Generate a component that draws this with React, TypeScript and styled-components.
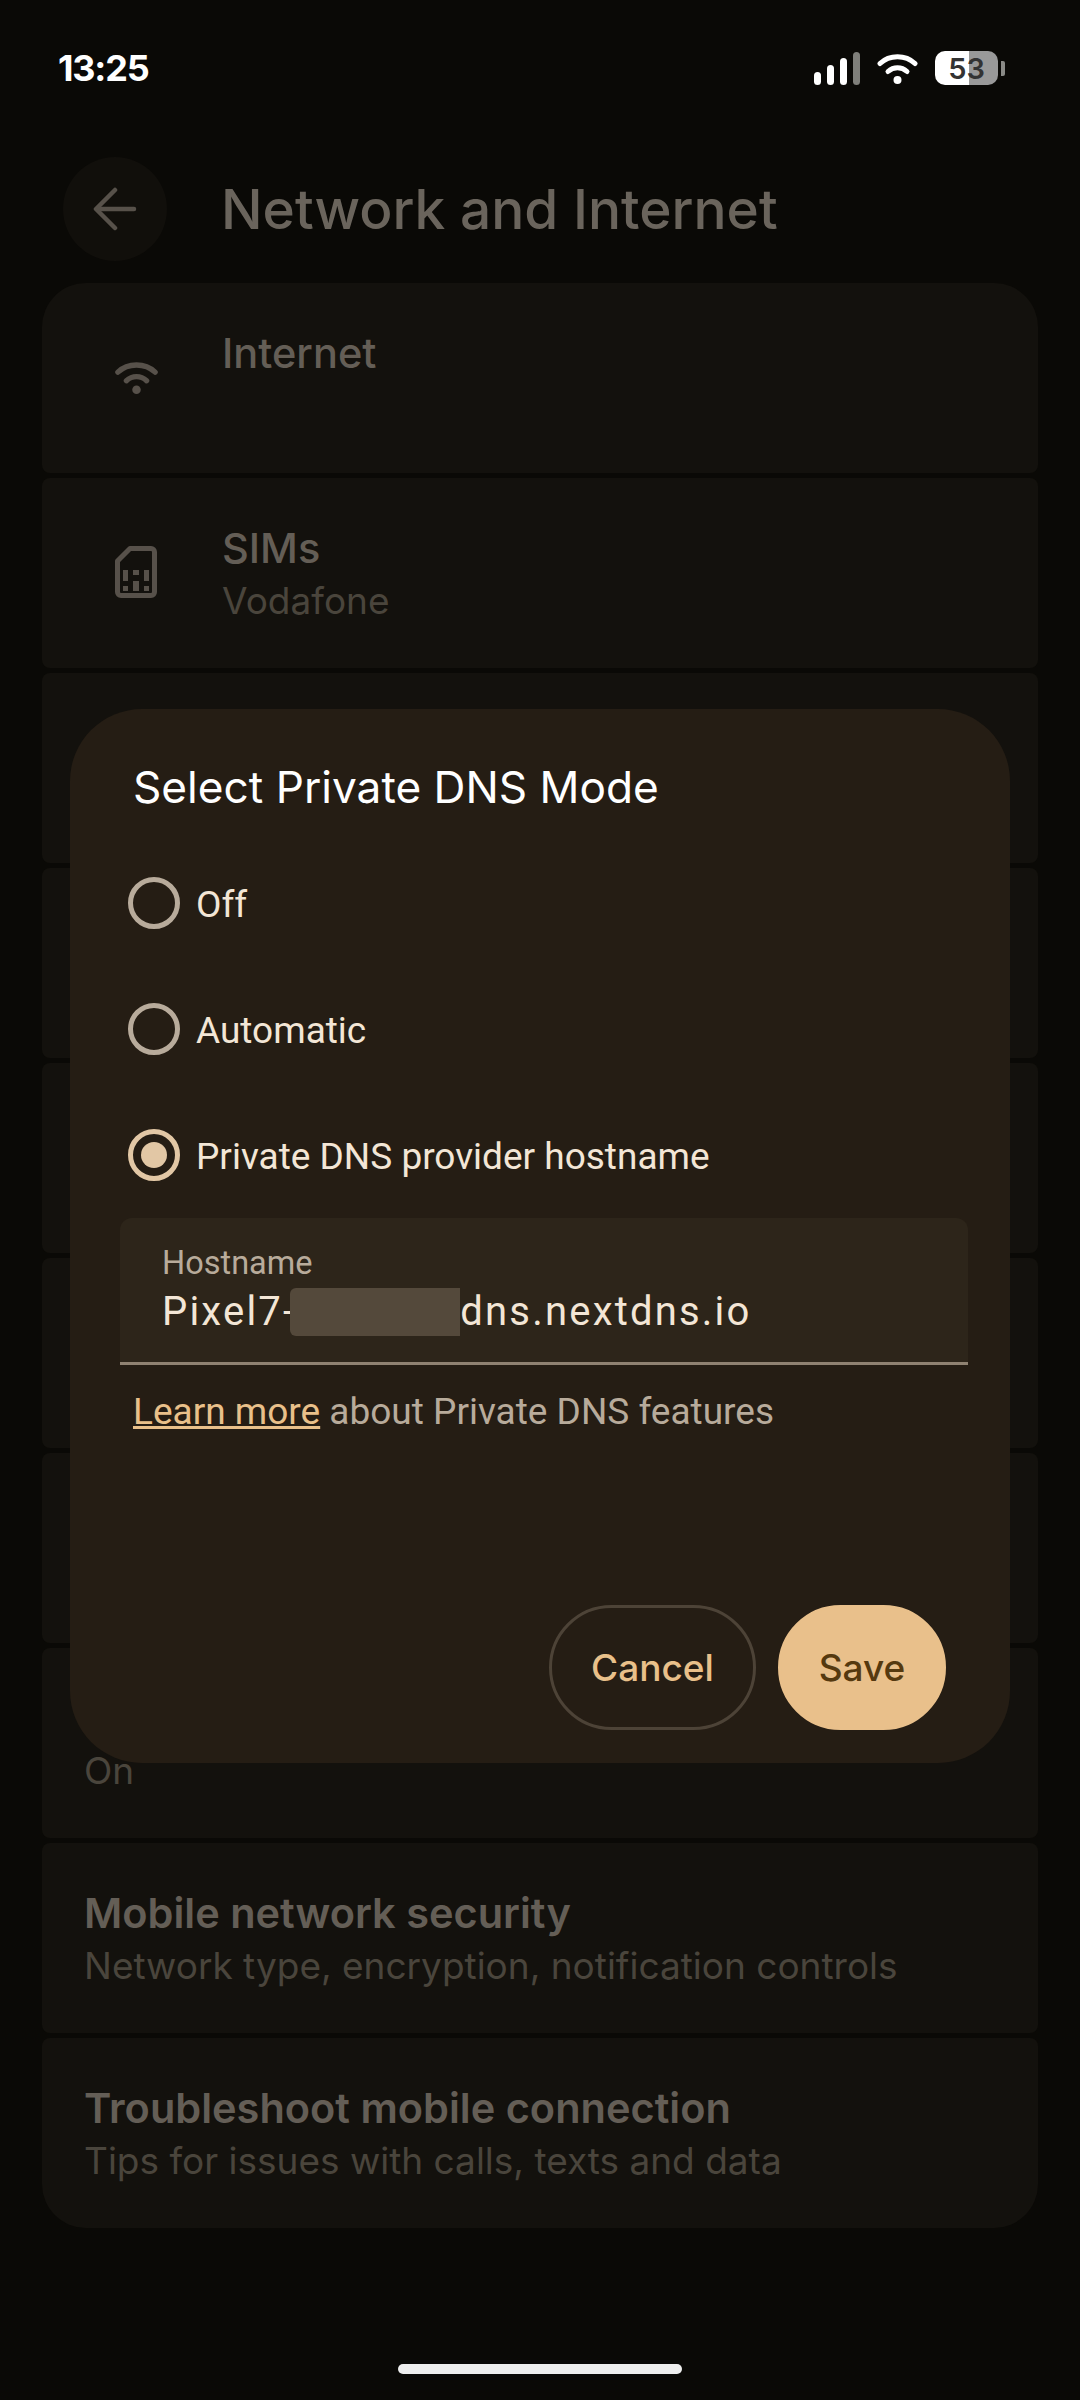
import React from 'react';
import styled, { createGlobalStyle } from 'styled-components';

const GlobalStyle = createGlobalStyle`
  html, body {
    margin: 0;
    padding: 0;
    background: #0a0906;
  }
`;

const Page = styled.div`
  position: relative;
  width: 1080px;
  height: 2400px;
  overflow: hidden;
  background: #0a0906;
  font-family: Inter, "Liberation Sans", sans-serif;
`;

const StatusBar = styled.div`
  display: flex;
  justify-content: space-between;
  align-items: center;
  height: 34px;
  padding: 51px 75px 0 58px;
`;

const Clock = styled.div`
  font-size: 36px;
  font-weight: 700;
  line-height: 34px;
  letter-spacing: -1.2px;
  color: #fff;
`;

const StatusIcons = styled.div`
  display: flex;
  align-items: center;
`;

const SignalBars = styled.div`
  display: flex;
  align-items: flex-end;
  gap: 6px;
  height: 33px;
  margin-right: 17px;
`;

const SignalBar = styled.span<{ $height: number; $dim?: boolean }>`
  width: 7px;
  height: ${({ $height }) => $height}px;
  border-radius: 4px;
  background: ${({ $dim }) => ($dim ? '#7f7f7a' : '#fff')};
`;

const BatteryBody = styled.div`
  display: flex;
  align-items: center;
  justify-content: center;
  width: 63px;
  height: 34px;
  margin-left: 17px;
  border-radius: 10px;
  background: linear-gradient(90deg, #fff 54%, #999 54%);
  font-size: 29px;
  font-weight: 600;
  color: #333;
`;

const BatteryNub = styled.span`
  width: 4px;
  height: 15px;
  margin-left: 3px;
  border-radius: 0 2px 2px 0;
  background: #8a8a86;
`;

const Header = styled.div`
  display: flex;
  align-items: center;
  gap: 54px;
  margin: 72px 0 22px 63px;
  height: 104px;
`;

const BackButton = styled.div`
  display: flex;
  align-items: center;
  justify-content: center;
  width: 104px;
  height: 104px;
  border-radius: 50%;
  background: #110f0b;
`;

const PageTitle = styled.div`
  font-size: 55px;
  font-weight: 500;
  line-height: 64px;
  color: #6a645c;
`;

const RowList = styled.div`
  display: flex;
  flex-direction: column;
  gap: 5px;
  margin: 0 42px;
`;

const Row = styled.div<{ $first?: boolean; $last?: boolean }>`
  display: flex;
  height: 190px;
  box-sizing: border-box;
  padding: 46px 42px 0;
  background: #13110d;
  border-radius: ${({ $first, $last }) => `${$first ? 44 : 8}px ${$first ? 44 : 8}px ${$last ? 44 : 8}px ${$last ? 44 : 8}px`};
`;

const RowIcon = styled.div`
  display: flex;
  justify-content: center;
  align-items: center;
  flex: none;
  width: 104px;
  height: 96px;
  margin-right: 34px;
`;

const RowText = styled.div`
  display: flex;
  flex-direction: column;
`;

const RowTitle = styled.div<{ $strong?: boolean }>`
  min-height: 48px;
  font-size: 41.5px;
  font-weight: ${({ $strong }) => ($strong ? 600 : 500)};
  line-height: 48px;
  color: #645e56;
`;

const RowSub = styled.div`
  font-size: 37px;
  line-height: 58px;
  color: #4a453c;
`;

const Dialog = styled.div`
  position: absolute;
  top: 709px;
  left: 70px;
  display: flex;
  flex-direction: column;
  box-sizing: border-box;
  width: 940px;
  height: 1054px;
  padding-top: 52px;
  border-radius: 72px;
  background: #251d14;
`;

const DialogTitle = styled.div`
  margin: 0 0 27px 63px;
  font-size: 44.2px;
  line-height: 52px;
  color: #fff;
`;

const RadioRow = styled.div`
  display: flex;
  align-items: center;
  gap: 16px;
  height: 126px;
  padding-left: 58px;
`;

const RadioCircle = styled.span<{ $checked?: boolean }>`
  display: flex;
  align-items: center;
  justify-content: center;
  box-sizing: border-box;
  width: 52px;
  height: 52px;
  border: 5px solid ${({ $checked }) => ($checked ? '#e2c7a5' : '#b8ab9b')};
  border-radius: 50%;
`;

const RadioDot = styled.span`
  width: 26px;
  height: 26px;
  border-radius: 50%;
  background: #e2c7a5;
`;

const RadioLabel = styled.span`
  padding-top: 3px;
  font-family: Roboto, "Liberation Sans", sans-serif;
  font-size: 37px;
  color: #f3e6d6;
`;

const Field = styled.div`
  box-sizing: border-box;
  height: 147px;
  margin: 0 42px 0 50px;
  padding: 27px 42px 0;
  border-bottom: 3px solid #8f8272;
  border-radius: 12px 12px 0 0;
  background: #2d251a;
  font-family: Roboto, "Liberation Sans", sans-serif;
`;

const FieldLabel = styled.div`
  font-size: 32.5px;
  line-height: 36px;
  color: #b8ab9b;
`;

const FieldValue = styled.div`
  display: flex;
  align-items: center;
  margin-top: 7px;
  font-size: 40px;
  line-height: 48px;
  letter-spacing: 2.2px;
  color: #f3e6d6;
`;

const Redacted = styled.span`
  width: 170px;
  height: 48px;
  margin-left: -6px;
  border-radius: 6px 0 0 6px;
  background: #54493b;
`;

const Hint = styled.div`
  margin: 23px 0 0 63px;
  font-family: Roboto, "Liberation Sans", sans-serif;
  font-size: 37px;
  line-height: 48px;
  color: #b8ab9b;
`;

const HintLink = styled.span`
  color: #e9c08a;
  text-decoration: underline;
`;

const Actions = styled.div`
  display: flex;
  justify-content: flex-end;
  gap: 22px;
  margin-top: auto;
  padding: 0 64px 33px 0;
`;

const ActionButton = styled.div<{ $filled?: boolean }>`
  display: flex;
  align-items: center;
  justify-content: center;
  box-sizing: border-box;
  width: ${({ $filled }) => ($filled ? 168 : 207)}px;
  height: 125px;
  border: 3px solid ${({ $filled }) => ($filled ? '#e9c08b' : '#4d4337')};
  border-radius: 63px;
  background: ${({ $filled }) => ($filled ? '#e9c08b' : 'transparent')};
  font-size: 37px;
  font-weight: 500;
  color: ${({ $filled }) => ($filled ? '#55390f' : '#e9c08a')};
`;

const HomeIndicator = styled.div`
  position: absolute;
  left: 398px;
  bottom: 26px;
  width: 284px;
  height: 10px;
  border-radius: 5px;
  background: #eee;
`;

const WifiIcon = ({ width, height, color }: { width: number; height: number; color: string }) => (
  <svg width={width} height={height} viewBox="0 0 41 31" fill="none">
    <path d="M3 10.5C12.5 1.5 28.5 1.5 38 10.5" stroke={color} strokeWidth="5" strokeLinecap="round" />
    <path d="M11 18.5C16.5 13.5 24.5 13.5 30 18.5" stroke={color} strokeWidth="5" strokeLinecap="round" />
    <circle cx="20.5" cy="27" r="4" fill={color} />
  </svg>
);

const BackArrow = () => (
  <svg width="44" height="44" viewBox="0 0 44 44" fill="none" stroke="#57514a" strokeWidth="4.5" strokeLinecap="round" strokeLinejoin="round">
    <path d="M41 22H4" />
    <path d="M22 3L3 22L22 41" />
  </svg>
);

const SimIcon = () => (
  <svg width="42" height="52" viewBox="0 0 42 52" fill="none">
    <path d="M15 2.5H36C38 2.5 39.5 4 39.5 6V46C39.5 48 38 49.5 36 49.5H6C4 49.5 2.5 48 2.5 46V15Z" stroke="#57514a" strokeWidth="5" strokeLinejoin="round" />
    <g fill="#57514a">
      <rect x="8" y="24" width="5" height="11" />
      <rect x="8" y="40" width="5" height="5" />
      <rect x="18" y="24" width="6" height="5" />
      <rect x="18" y="35" width="6" height="10" />
      <rect x="29" y="24" width="5" height="11" />
      <rect x="29" y="40" width="5" height="5" />
    </g>
  </svg>
);

interface RowData {
  icon?: React.ReactNode;
  title?: string;
  sub?: string;
  strong?: boolean;
}

const rows: RowData[] = [
  { icon: <WifiIcon width={45} height={33} color="#57514a" />, title: 'Internet' },
  { icon: <SimIcon />, title: 'SIMs', sub: 'Vodafone' },
  {},
  {},
  {},
  {},
  {},
  { sub: 'On' },
  { title: 'Mobile network security', sub: 'Network type, encryption, notification controls', strong: true },
  { title: 'Troubleshoot mobile connection', sub: 'Tips for issues with calls, texts and data', strong: true },
];

const modes = ['Off', 'Automatic', 'Private DNS provider hostname'];

const App = () => {
  return (
    <Page>
      <GlobalStyle />
      <StatusBar>
        <Clock>13:25</Clock>
        <StatusIcons>
          <SignalBars>
            <SignalBar $height={13} />
            <SignalBar $height={20} />
            <SignalBar $height={27} />
            <SignalBar $height={33} $dim />
          </SignalBars>
          <WifiIcon width={41} height={31} color="#fff" />
          <BatteryBody>53</BatteryBody>
          <BatteryNub />
        </StatusIcons>
      </StatusBar>

      <Header>
        <BackButton>
          <BackArrow />
        </BackButton>
        <PageTitle>Network and Internet</PageTitle>
      </Header>

      <RowList>
        {rows.map((row, i) => (
          <Row key={i} $first={i === 0} $last={i === rows.length - 1}>
            {row.icon && <RowIcon>{row.icon}</RowIcon>}
            <RowText>
              <RowTitle $strong={row.strong}>{row.title}</RowTitle>
              {row.sub && <RowSub>{row.sub}</RowSub>}
            </RowText>
          </Row>
        ))}
      </RowList>

      <Dialog>
        <DialogTitle>Select Private DNS Mode</DialogTitle>
        {modes.map((mode, i) => (
          <RadioRow key={mode}>
            <RadioCircle $checked={i === 2}>{i === 2 && <RadioDot />}</RadioCircle>
            <RadioLabel>{mode}</RadioLabel>
          </RadioRow>
        ))}
        <Field>
          <FieldLabel>Hostname</FieldLabel>
          <FieldValue>
            Pixel7-
            <Redacted />
            dns.nextdns.io
          </FieldValue>
        </Field>
        <Hint>
          <HintLink>Learn more</HintLink> about Private DNS features
        </Hint>
        <Actions>
          <ActionButton>Cancel</ActionButton>
          <ActionButton $filled>Save</ActionButton>
        </Actions>
      </Dialog>

      <HomeIndicator />
    </Page>
  );
};

export default App;
